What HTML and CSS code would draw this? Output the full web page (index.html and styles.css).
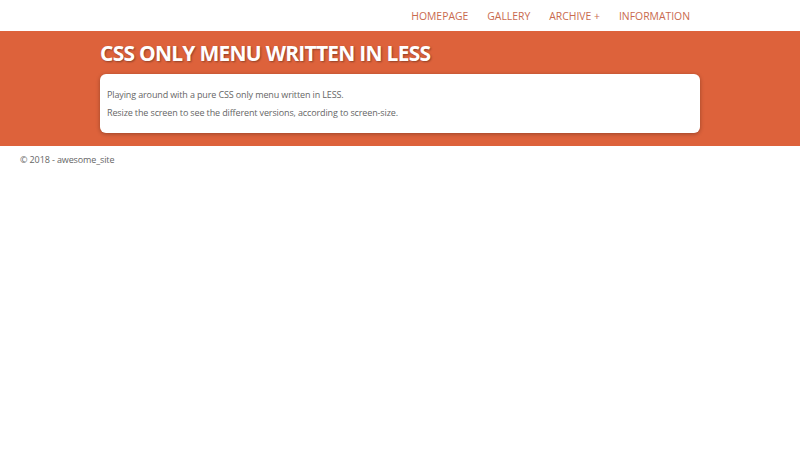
FILE: index.html
```html
<!DOCTYPE html>
<html lang="en">
<head>
  <meta charset="UTF-8" />
  <meta name="viewport" content="width=device-width, initial-scale=1.0" />
  <title>CSS only menu</title>
  <link rel="stylesheet" href="styles.css">
</head>
<body>
  <header class="topbar">
    <nav class="menu">
      <a href="#">Homepage</a>
      <a href="#">Gallery</a>
      <a href="#">Archive +</a>
      <a href="#">Information</a>
    </nav>
  </header>

  <section class="banner">
    <div class="container">
      <h1>CSS only menu written in LESS</h1>
      <div class="box">
        <p>Playing around with a pure CSS only menu written in LESS.</p>
        <p>Resize the screen to see the different versions, according to screen-size.</p>
      </div>
    </div>
  </section>

  <footer class="footer">&copy; 2018 - awesome_site</footer>
</body>
</html>
```
FILE: styles.css
```css
* {
  box-sizing: border-box;
}

body {
  margin: 0;
  font-family: "Open Sans", sans-serif;
  background: #fff;
  color: #666;
}

.topbar {
  height: 31px;
}

.menu {
  max-width: 600px;
  margin: 0 auto;
  display: flex;
  justify-content: flex-end;
  gap: 19px;
  padding: 1px 10px 0;
  line-height: 30px;
}

.menu a {
  color: #c96a4e;
  text-decoration: none;
  text-transform: uppercase;
  font-size: 10.4px;
}

.banner {
  background: #dd623b;
  padding: 7px 0 13px;
}

.container {
  max-width: 600px;
  margin: 0 auto;
}

h1 {
  margin: 0 0 6px;
  color: #fff;
  font-size: 21px;
  font-weight: 700;
  letter-spacing: -0.75px;
  text-transform: uppercase;
  text-shadow: 1px 1px 2px rgba(0, 0, 0, 0.35);
  line-height: 30px;
}

.box {
  background: #fff;
  border-radius: 6px;
  box-shadow: 0 1px 4px rgba(0, 0, 0, 0.3);
  padding: 15px 7px 14px;
  font-size: 9px;
  letter-spacing: -0.13px;
}

.box p {
  margin: 0 0 6px;
  line-height: 12px;
}

.box p:last-child {
  margin-bottom: 0;
}

.footer {
  padding: 7px 20px;
  font-size: 9px;
  letter-spacing: -0.12px;
  line-height: 14px;
}
```
